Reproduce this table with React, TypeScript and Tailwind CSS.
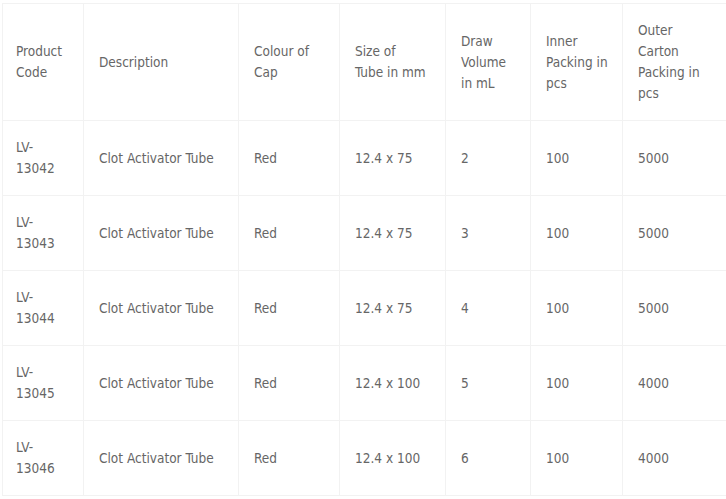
const headers = [
  ['Product', 'Code'],
  ['Description'],
  ['Colour of', 'Cap'],
  ['Size of', 'Tube in mm'],
  ['Draw', 'Volume', 'in mL'],
  ['Inner', 'Packing in', 'pcs'],
  ['Outer', 'Carton', 'Packing in', 'pcs'],
];

const widths = ['w-[81px]', 'w-[155px]', 'w-[101px]', 'w-[106px]', 'w-[85px]', 'w-[92px]', 'w-[112px]'];

const rows = [
  ['LV-13042', 'Clot Activator Tube', 'Red', '12.4 x 75', '2', '100', '5000'],
  ['LV-13043', 'Clot Activator Tube', 'Red', '12.4 x 75', '3', '100', '5000'],
  ['LV-13044', 'Clot Activator Tube', 'Red', '12.4 x 75', '4', '100', '5000'],
  ['LV-13045', 'Clot Activator Tube', 'Red', '12.4 x 100', '5', '100', '4000'],
  ['LV-13046', 'Clot Activator Tube', 'Red', '12.4 x 100', '6', '100', '4000'],
];

export default function App() {
  return (
    <div className="w-[726px] h-[499px] overflow-hidden bg-white pt-[3px] pl-[2px]">
      <table
        className="w-[732px] table-fixed border-collapse text-[13.5px] leading-[21px] text-[#666666]"
        style={{ fontFamily: '"DejaVu Sans Condensed", "DejaVu Sans", sans-serif' }}
      >
        <colgroup>
          {widths.map((w, i) => (
            <col key={i} className={w} />
          ))}
        </colgroup>
        <thead>
          <tr className="h-[117px]">
            {headers.map((h, i) => (
              <th
                key={i}
                className={`border border-[#f2f2f2] ${i === 0 ? 'pl-[13px]' : 'pl-[15px]'} pr-[12px] text-left align-middle font-normal whitespace-nowrap`}
              >
                {h.map((line, j) => (
                  <div key={j}>{line}</div>
                ))}
              </th>
            ))}
          </tr>
        </thead>
        <tbody>
          {rows.map((r) => (
            <tr key={r[0]} className="h-[75px]">
              {r.map((c, i) => (
                <td key={i} className={`border border-[#f2f2f2] ${i === 0 ? 'pl-[13px]' : 'pl-[15px]'} pr-[12px] align-middle`}>
                  {c}
                </td>
              ))}
            </tr>
          ))}
        </tbody>
      </table>
    </div>
  );
}
